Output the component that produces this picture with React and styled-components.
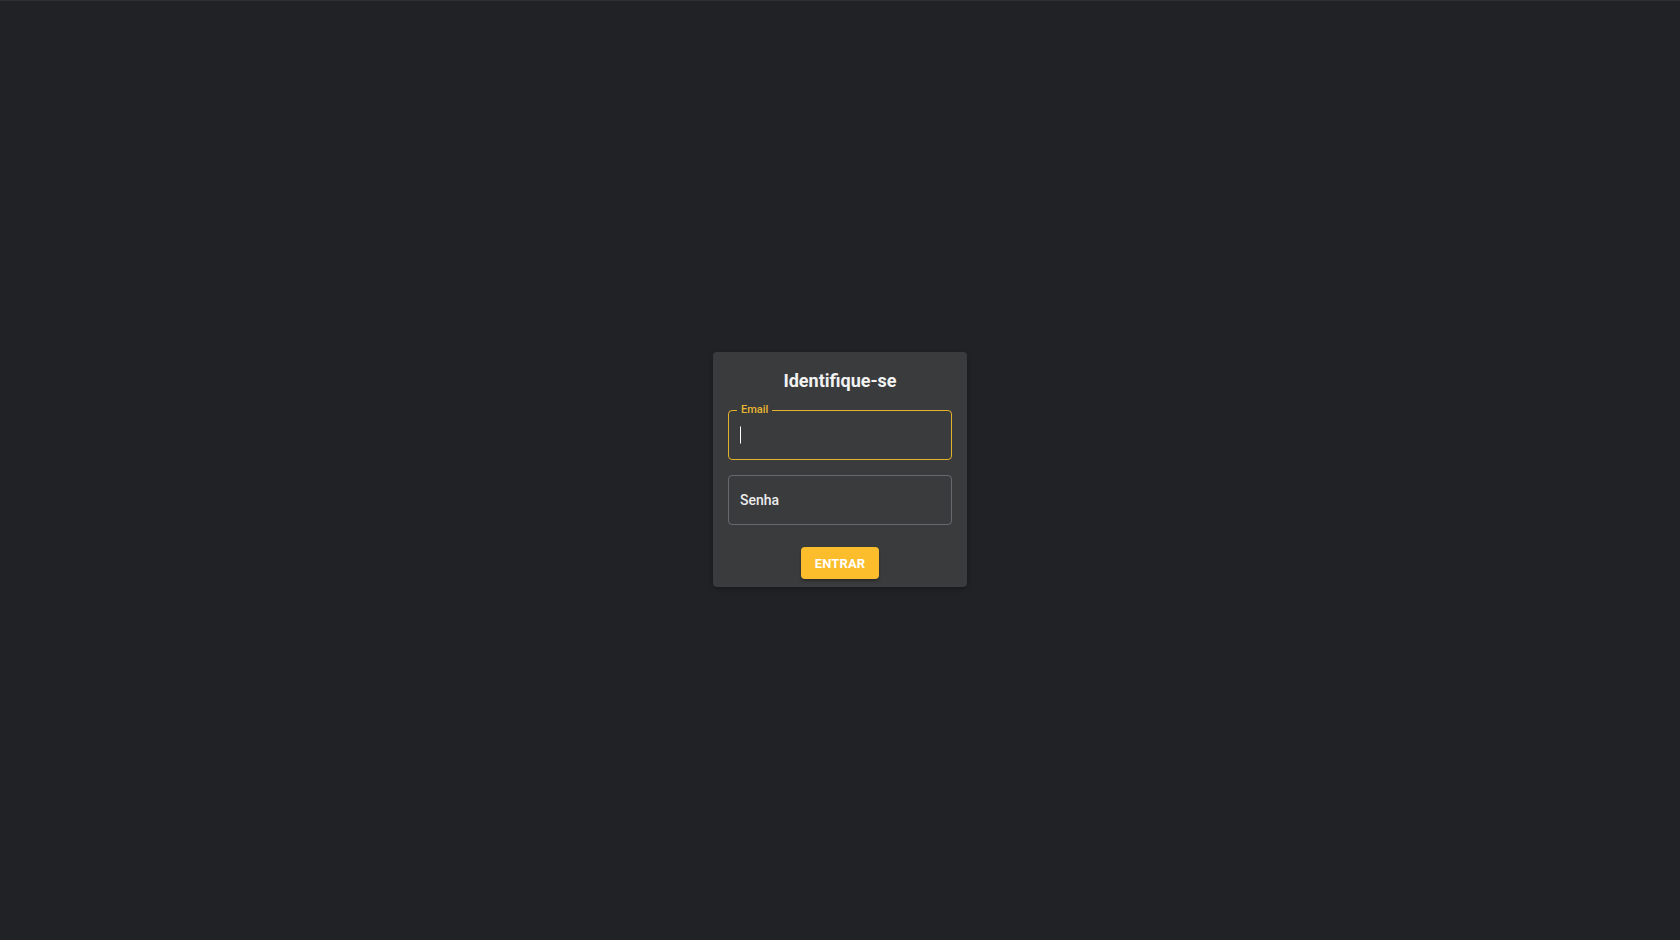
import React, { useState } from 'react';
import styled, { createGlobalStyle } from 'styled-components';

const GlobalStyle = createGlobalStyle`
  html, body {
    margin: 0;
    padding: 0;
    height: 100%;
    background-color: #202226;
  }

  body {
    font-family: Roboto, "Liberation Sans", Arial, sans-serif;
    border-top: 1px solid #2f3034;
    box-sizing: border-box;
  }

  #root {
    height: 100%;
  }
`;

const Page = styled.div`
  height: 937px;
  display: flex;
  align-items: center;
  justify-content: center;
`;

const LoginCard = styled.form`
  width: 254px;
  box-sizing: border-box;
  padding: 17px 15px 8px;
  background-color: #3a3b3d;
  border-radius: 4px;
  box-shadow: 0 2px 4px rgba(0, 0, 0, 0.25);
  display: flex;
  flex-direction: column;
`;

const Title = styled.h2`
  margin: 0 0 17px 0;
  font-size: 18px;
  line-height: 24px;
  font-weight: 700;
  color: #f2f2f2;
  text-align: center;
`;

const Field = styled.div`
  position: relative;
  height: 50px;
  box-sizing: border-box;
  border: 1px solid ${({ focused }) => (focused ? '#e3b12e' : '#67686b')};
  border-radius: 4px;
  margin-bottom: ${({ last }) => (last ? '0' : '15px')};
  display: flex;
  align-items: center;
`;

const FloatingLabel = styled.label`
  position: absolute;
  left: 8px;
  top: -8px;
  padding: 0 4px;
  background-color: #3a3b3d;
  font-size: 11px;
  line-height: 14px;
  font-weight: 500;
  color: #e8b631;
`;

const InnerLabel = styled.label`
  position: absolute;
  left: 11px;
  top: 50%;
  transform: translateY(-50%);
  font-size: 14px;
  font-weight: 500;
  color: #ececec;
  pointer-events: none;
`;

const Caret = styled.span`
  position: absolute;
  left: 11px;
  top: 50%;
  width: 1px;
  height: 17px;
  transform: translateY(-50%);
  background-color: #ffffff;
  pointer-events: none;
`;

const Input = styled.input`
  width: 100%;
  height: 100%;
  box-sizing: border-box;
  padding: 0 11px;
  border: none;
  outline: none;
  background: transparent;
  color: #ffffff;
  caret-color: #ffffff;
  font-family: inherit;
  font-size: 15px;
`;

const Actions = styled.div`
  display: flex;
  justify-content: center;
  margin-top: 22px;
`;

const SubmitButton = styled.button`
  height: 32px;
  padding: 0 14px;
  border: none;
  border-radius: 4px;
  background-color: #fbbd2c;
  color: #ffffff;
  font-family: inherit;
  font-size: 13px;
  font-weight: 700;
  letter-spacing: 0.15px;
  cursor: pointer;
  box-shadow: 0 2px 3px rgba(0, 0, 0, 0.3);

  &:hover {
    background-color: #f5b21a;
  }
`;

const App = () => {
  const [email, setEmail] = useState('');
  const [senha, setSenha] = useState('');
  const [emailFocused, setEmailFocused] = useState(false);

  const handleSubmit = (e) => {
    e.preventDefault();
  };

  return (
    <>
      <GlobalStyle />
      <Page>
        <LoginCard onSubmit={handleSubmit}>
          <Title>Identifique-se</Title>

          <Field focused>
            <FloatingLabel htmlFor="email">Email</FloatingLabel>
            {!email && !emailFocused && <Caret />}
            <Input
              id="email"
              type="email"
              value={email}
              onFocus={() => setEmailFocused(true)}
              onBlur={() => setEmailFocused(false)}
              onChange={(e) => setEmail(e.target.value)}
            />
          </Field>

          <Field last>
            {!senha && <InnerLabel htmlFor="senha">Senha</InnerLabel>}
            <Input
              id="senha"
              type="password"
              value={senha}
              onChange={(e) => setSenha(e.target.value)}
            />
          </Field>

          <Actions>
            <SubmitButton type="submit">ENTRAR</SubmitButton>
          </Actions>
        </LoginCard>
      </Page>
    </>
  );
};

export default App;
